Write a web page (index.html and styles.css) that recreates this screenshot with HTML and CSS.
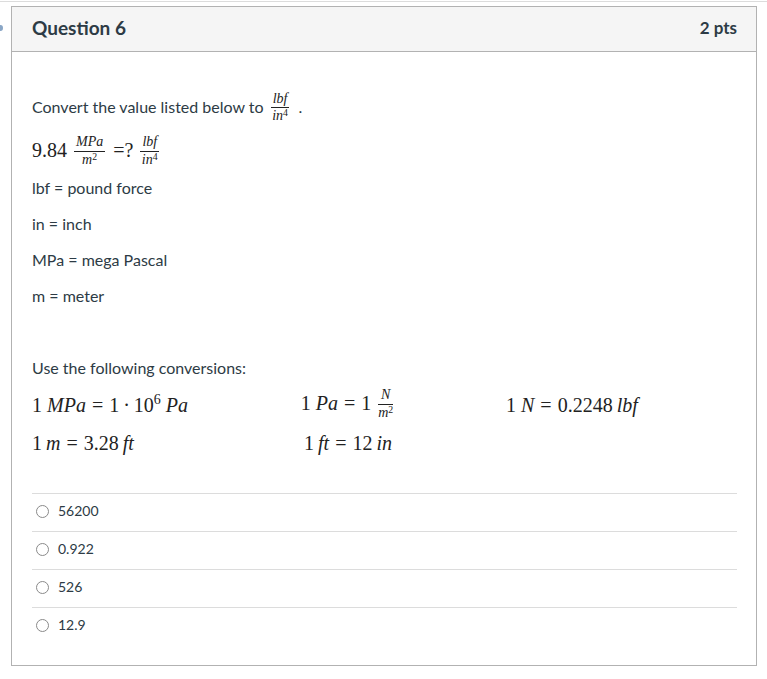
FILE: index.html
```html
<!DOCTYPE html>
<html>
<head>
<meta charset="utf-8">
<link rel="stylesheet" href="styles.css">
</head>
<body>
<div class="topline"></div>
<div class="page">
  <span class="marker"></span>
  <div class="card">
    <div class="header">
      <h2 class="title">Question 6</h2>
      <span class="pts">2 pts</span>
    </div>
    <div class="body">
      <p class="row">Convert the value listed below to <span class="frac tfrac"><span class="num"><i>lbf</i></span><span class="den"><i>in</i><sup>4</sup></span></span> <span class="dot">.</span></p>
      <p class="row math-row"><span class="math">9.84 <span class="frac"><span class="num"><i>MPa</i></span><span class="den"><i>m</i><sup>2</sup></span></span><span class="rel">=?</span><span class="frac"><span class="num"><i>lbf</i></span><span class="den"><i>in</i><sup>4</sup></span></span></span></p>
      <p class="row r-lbf">lbf = pound force</p>
      <p class="row">in = inch</p>
      <p class="row">MPa = mega Pascal</p>
      <p class="row">m = meter</p>
      <p class="row"></p>
      <p class="row">Use the following conversions:</p>
      <div class="conv">
        <div class="cell c1"><span class="math">1<span class="sp"></span><i>MPa</i><span class="eq">=</span>1<span class="op">·</span>10<sup class="msup">6</sup><span class="sp"></span><i>Pa</i></span></div>
        <div class="cell c2"><span class="math">1<span class="sp"></span><i>Pa</i><span class="eq">=</span>1<span class="sp"></span><span class="frac"><span class="num"><i>N</i></span><span class="den"><i>m</i><sup>2</sup></span></span></span></div>
        <div class="cell c3"><span class="math">1<span class="sp"></span><i>N</i><span class="eq">=</span>0.2248<span class="sp2"></span><i>lbf</i></span></div>
        <div class="cell c1"><span class="math">1<span class="sp2"></span><i>m</i><span class="eq">=</span>3.28<span class="sp2"></span><i>ft</i></span></div>
        <div class="cell c2"><span class="math">1<span class="sp2"></span><i>ft</i><span class="eq">=</span>12<span class="sp2"></span><i>in</i></span></div>
        <div class="cell c3"></div>
      </div>
      <ul class="answers">
        <li class="answer"><span class="radio"></span><span class="atext">56200</span></li>
        <li class="answer"><span class="radio"></span><span class="atext">0.922</span></li>
        <li class="answer"><span class="radio"></span><span class="atext">526</span></li>
        <li class="answer"><span class="radio"></span><span class="atext">12.9</span></li>
      </ul>
    </div>
  </div>
</div>
</body>
</html>
```
FILE: styles.css
```css
* { box-sizing: border-box; }
html, body { margin: 0; padding: 0; background: #fff; }
body {
  font-family: Lato, "Liberation Sans", sans-serif;
  color: #2d3b45;
  width: 767px;
  height: 679px;
  overflow: hidden;
}
.topline {
  margin-top: 1px;
  height: 1px;
  background: #dcdcdc;
}
.page {
  position: relative;
  padding-top: 4px;
  padding-left: 11px;
}
.marker {
  position: absolute;
  left: -2px;
  top: 23px;
  width: 5px;
  height: 6px;
  border-radius: 50%;
  background: #8aa6c6;
}
.card {
  width: 746px;
  height: 660px;
  border: 1px solid #b2b2b2;
  background: #fff;
}
.header {
  height: 45px;
  background: #f5f5f5;
  border-bottom: 1px solid #b2b2b2;
  display: flex;
  align-items: center;
  justify-content: space-between;
  padding: 0 19px 3px 20px;
}
.title {
  margin: 0;
  font-size: 19px;
  font-weight: 700;
  line-height: 1;
}
.pts {
  font-size: 17px;
  font-weight: 700;
}
.body {
  padding: 37px 19px 0 20px;
  display: flex;
  flex-direction: column;
}
.row {
  margin: 0;
  height: 36px;
  line-height: 36px;
  font-size: 16px;
  white-space: nowrap;
}
.math-row { margin-top: 7px; }
.r-lbf { margin-top: 2px; }
.math {
  font-family: "Liberation Serif", "Times New Roman", serif;
  font-size: 20px;
  color: #222;
}
.math i { font-style: italic; }
.frac {
  display: inline-flex;
  flex-direction: column;
  align-items: center;
  vertical-align: middle;
  font-size: 14px;
  line-height: 1.05;
  margin: 0 2px;
  position: relative;
  top: -1px;
}
.frac .num {
  border-bottom: 1px solid #222;
  padding: 0 2px 1px;
  width: 100%;
  text-align: center;
}
.frac .den {
  padding-top: 1px;
}
.frac sup {
  font-size: 0.7em;
  line-height: 0;
  vertical-align: 0.45em;
}
.tfrac {
  font-family: "Liberation Serif", "Times New Roman", serif;
  font-size: 14px;
  color: #222;
  margin-left: 3px;
}
.dot { margin-left: 3px; }
.rel { margin: 0 5px 0 6px; }
.sp { display: inline-block; width: 5px; }
.sp2 { display: inline-block; width: 4px; }
.eq { margin: 0 6px; }
.op { margin: 0 4px; }
.msup {
  font-size: 0.7em;
  line-height: 0;
  vertical-align: 0.55em;
}
.conv {
  display: grid;
  grid-template-columns: 164px 304px 1fr;
  grid-auto-rows: 38px;
}
.cell {
  display: flex;
  align-items: center;
  white-space: nowrap;
}
.c2 { justify-content: center; }
.c3 { padding-left: 6px; }
.answers {
  list-style: none;
  margin: 31px 0 0;
  padding: 0;
}
.answer {
  height: 38px;
  border-top: 1px solid #dcdcdc;
  display: flex;
  align-items: center;
  padding-left: 4px;
  padding-bottom: 5px;
  font-size: 14px;
}
.radio {
  width: 13px;
  height: 13px;
  border: 1px solid #8a8a8a;
  border-radius: 50%;
  margin-right: 9px;
  margin-top: 3px;
  background: #fff;
}
```
